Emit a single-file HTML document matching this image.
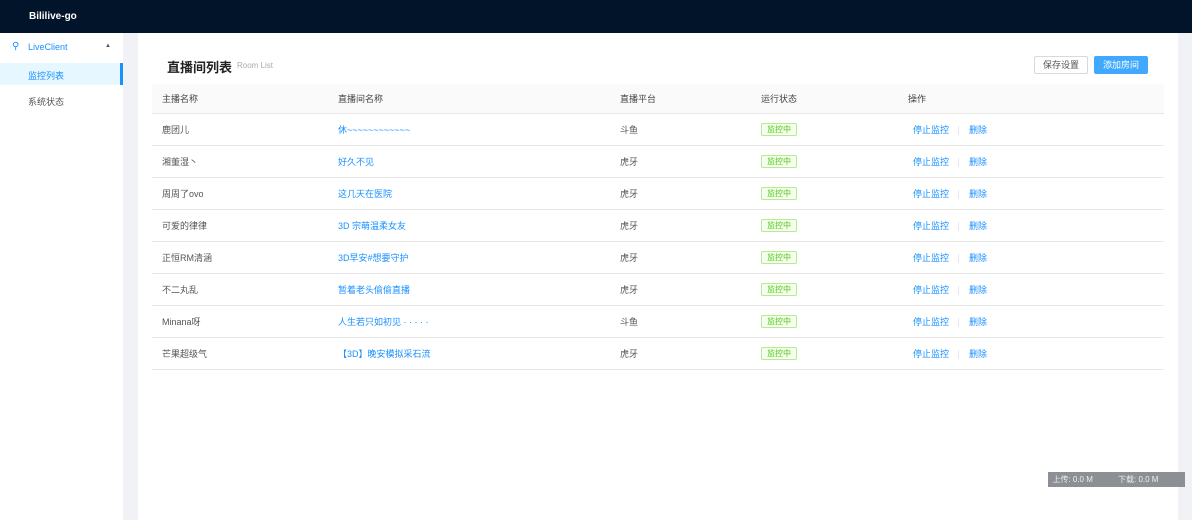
<!DOCTYPE html>
<html><head><meta charset="utf-8"><style>
*{margin:0;padding:0;box-sizing:border-box}
body{width:1192px;height:520px;overflow:hidden;background:#f0f2f5;font-family:"Liberation Sans","Noto Sans CJK SC",sans-serif;font-size:9px;color:#555;position:relative}
.hd{position:absolute;left:0;top:0;width:1192px;height:33px;background:#021429}
.hd b{position:absolute;left:29px;top:11px;color:#fff;font-size:10px}
.sb{position:absolute;left:0;top:33px;width:123px;height:487px;background:#fff}
.sb .g{position:absolute;left:28px;top:9px;color:#1890ff;font-size:9px}
.sb .ic{position:absolute;left:12px;top:8px;color:#1890ff;font-size:10px}
.sb .ar{position:absolute;left:105px;top:10px;font-size:6px;color:#555}
.sb .sel{position:absolute;left:0;top:30px;width:123px;height:22px;background:#e6f7ff;border-right:3px solid #1890ff}
.sb .sel span{position:absolute;left:28px;top:6px;color:#1890ff}
.sb .o{position:absolute;left:28px;top:62px}
.main{position:absolute;left:138px;top:33px;width:1040px;height:487px;background:#fff}
.tt{position:absolute;left:29px;top:24px;font-size:13px;font-weight:bold;color:#222}
.ts{position:absolute;left:99px;top:28px;font-size:8px;color:#aaa}
.b1{position:absolute;left:896px;top:23px;width:54px;height:18px;border:1px solid #d9d9d9;border-radius:2px;text-align:center;line-height:16px;color:#555}
.b2{position:absolute;left:956px;top:23px;width:54px;height:18px;background:#40a9ff;border-radius:2px;text-align:center;line-height:18px;color:#fff}
table{position:absolute;left:14px;top:51px;width:1012px;border-collapse:collapse}
td,th{height:32px;border-bottom:1px solid #e8e8e8;text-align:left;font-weight:normal;padding:0 0 0 10px;vertical-align:middle}
th{height:29px;background:#fafafa;color:#444}
.l{color:#1890ff}
.tag{display:inline-block;border:1px solid #b7eb8f;background:#f6ffed;color:#52c41a;font-size:8px;padding:0 5px;height:13px;line-height:11px;border-radius:2px}
.sep{display:inline-block;width:1px;height:9px;background:#e8e8e8;margin:0 10px 0 9px;vertical-align:middle}
.sp{position:absolute;left:1048px;top:472px;width:137px;height:15px;background:#8c8f94;color:#eee;font-size:8px;line-height:15px}
</style></head><body>
<div class="hd"><b>Bililive-go</b></div>
<div class="sb"><span class="ic">⚲</span><span class="g">LiveClient</span><span class="ar">▲</span>
<div class="sel"><span>监控列表</span></div><div class="o">系统状态</div></div>
<div class="main">
<div class="tt">直播间列表</div><div class="ts">Room List</div>
<div class="b1">保存设置</div><div class="b2">添加房间</div>
<table>
<colgroup><col style="width:176px"><col style="width:282px"><col style="width:141px"><col style="width:147px"><col></colgroup>
<tr><th>主播名称</th><th>直播间名称</th><th>直播平台</th><th>运行状态</th><th>操作</th></tr>
<tr><td>鹿团儿</td><td class="l">休~~~~~~~~~~~~</td><td>斗鱼</td><td><span class="tag">监控中</span></td><td>&nbsp;&nbsp;<span class="l">停止监控</span><span class="sep"></span><span class="l">删除</span></td></tr>
<tr><td>湘董湿丶</td><td class="l">好久不见</td><td>虎牙</td><td><span class="tag">监控中</span></td><td>&nbsp;&nbsp;<span class="l">停止监控</span><span class="sep"></span><span class="l">删除</span></td></tr>
<tr><td>周周了ovo</td><td class="l">这几天在医院</td><td>虎牙</td><td><span class="tag">监控中</span></td><td>&nbsp;&nbsp;<span class="l">停止监控</span><span class="sep"></span><span class="l">删除</span></td></tr>
<tr><td>可爱的律律</td><td class="l">3D 宗萌温柔女友</td><td>虎牙</td><td><span class="tag">监控中</span></td><td>&nbsp;&nbsp;<span class="l">停止监控</span><span class="sep"></span><span class="l">删除</span></td></tr>
<tr><td>正恒RM清涵</td><td class="l">3D早安#想要守护</td><td>虎牙</td><td><span class="tag">监控中</span></td><td>&nbsp;&nbsp;<span class="l">停止监控</span><span class="sep"></span><span class="l">删除</span></td></tr>
<tr><td>不二丸乱</td><td class="l">暂着老头偷偷直播</td><td>虎牙</td><td><span class="tag">监控中</span></td><td>&nbsp;&nbsp;<span class="l">停止监控</span><span class="sep"></span><span class="l">删除</span></td></tr>
<tr><td>Minana呀</td><td class="l">人生若只如初见 · · · · ·</td><td>斗鱼</td><td><span class="tag">监控中</span></td><td>&nbsp;&nbsp;<span class="l">停止监控</span><span class="sep"></span><span class="l">删除</span></td></tr>
<tr><td>芒果超级气</td><td class="l">【3D】晚安模拟采石流</td><td>虎牙</td><td><span class="tag">监控中</span></td><td>&nbsp;&nbsp;<span class="l">停止监控</span><span class="sep"></span><span class="l">删除</span></td></tr>
</table>
</div>
<div class="sp">&nbsp;&nbsp;上传: 0.0 M<span style="position:absolute;left:70px">下载: 0.0 M</span></div>
</body></html>
